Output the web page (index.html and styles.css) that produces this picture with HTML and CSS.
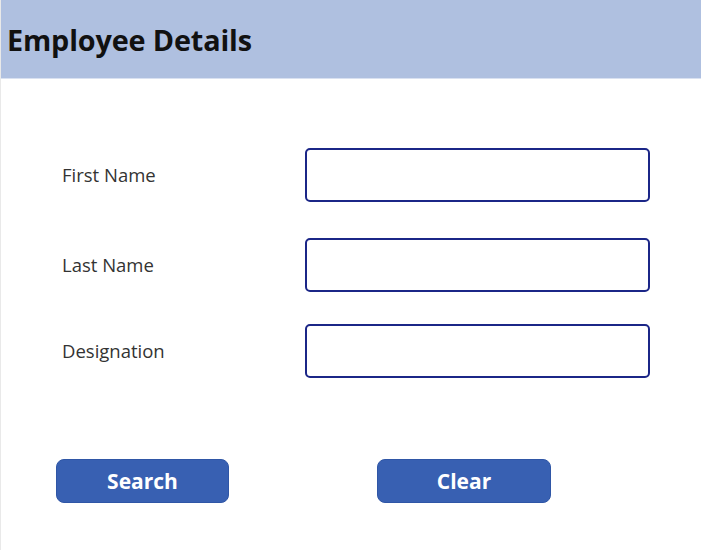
FILE: index.html
```html
<!DOCTYPE html>
<html>
<head>
<meta charset="utf-8">
<link rel="stylesheet" href="styles.css">
</head>
<body>
<div class="screen">
  <header class="header">
    <h1 class="title">Employee Details</h1>
  </header>
  <main class="form">
    <div class="row row-1">
      <label class="label">First Name</label>
      <input class="field" type="text">
    </div>
    <div class="row row-2">
      <label class="label">Last Name</label>
      <input class="field" type="text">
    </div>
    <div class="row row-3">
      <label class="label">Designation</label>
      <input class="field" type="text">
    </div>
    <div class="actions">
      <button class="btn btn-search">Search</button>
      <button class="btn btn-clear">Clear</button>
    </div>
  </main>
</div>
</body>
</html>
```
FILE: styles.css
```css
html, body {
  margin: 0;
  padding: 0;
  background: #ffffff;
}
.screen {
  width: 701px;
  height: 550px;
  box-sizing: border-box;
  border-left: 1px solid #e9e9e9;
  font-family: "Open Sans", "Noto Sans", sans-serif;
  overflow: hidden;
}
.header {
  height: 79px;
  background: #afc0e0;
  border-bottom: 1px solid #d9e1f1;
  box-sizing: border-box;
  display: flex;
  align-items: center;
  padding-left: 6px;
}
.title {
  margin: 0;
  font-size: 28.8px;
  font-weight: 700;
  color: #111111;
  letter-spacing: -0.15px;
}
.form {
  padding-top: 69px;
}
.row {
  display: flex;
  align-items: center;
  height: 54px;
}
.row-2 { margin-top: 36px; }
.row-3 { margin-top: 32px; }
.label {
  width: 243px;
  padding-left: 61px;
  margin-bottom: 2px;
  font-size: 18.5px;
  color: #333333;
}
.field {
  width: 345px;
  height: 54px;
  box-sizing: border-box;
  border: 2px solid #1b2687;
  border-radius: 5px;
  background: #ffffff;
  margin: 0;
  padding: 0 10px;
  outline: none;
}
.actions {
  display: flex;
  gap: 148px;
  margin-top: 81px;
  padding-left: 55px;
}
.btn {
  width: 173px;
  height: 44px;
  border: 1px solid #2f56a6;
  border-radius: 8px;
  background: #3860b2;
  color: #ffffff;
  font-family: "Open Sans", "Noto Sans", sans-serif;
  font-size: 21px;
  font-weight: 700;
  padding: 0;
  margin: 0;
}
.btn-clear { width: 174px; }
```
